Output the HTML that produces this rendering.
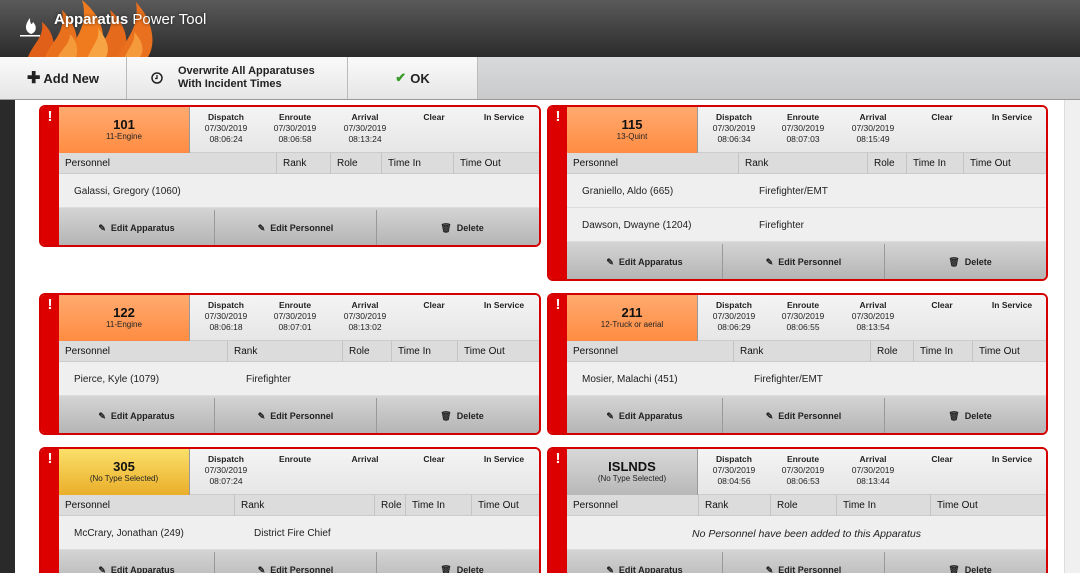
<!DOCTYPE html>
<html><head><meta charset="utf-8"><style>
*{box-sizing:border-box;margin:0;padding:0}
html,body{width:1080px;height:573px;overflow:hidden}
body{font-family:"Liberation Sans",sans-serif;background:#fff;position:relative}
#hdr{position:absolute;left:0;top:0;width:1080px;height:57px;background:linear-gradient(#5a5a5a,#2b2b2b);overflow:hidden}
#title{position:absolute;left:54px;top:11px;color:#fff;font-size:15px;text-shadow:0 0 3px rgba(0,0,0,.6)}
#title b{font-weight:bold}
#tb{position:absolute;left:0;top:57px;width:1080px;height:43px;background:linear-gradient(#d8dadc,#c8cacc);border-bottom:1px solid #999}
.tbb{position:absolute;top:0;height:42px;background:linear-gradient(#fafafa,#e6e6e6);border-right:1px solid #bbb;font-weight:bold;font-size:13px;color:#222;display:flex;align-items:center;justify-content:center}
#lstrip{position:absolute;left:0;top:100px;width:15px;height:473px;background:#2a2a2a}
#rstrip{position:absolute;left:1064px;top:100px;width:16px;height:473px;background:#f0f0f0;border-left:1px solid #ddd}
.card{position:absolute;border:2px solid #d40000;border-radius:6px;background:#f0f0f0;overflow:hidden}
.card .ex{position:absolute;left:0;top:0;bottom:0;width:18px;background:#dd0000;color:#fff;font-weight:bold;font-size:15px;text-align:center;padding-top:1px}
.top{position:absolute;left:18px;right:0;top:0;height:46px;background:linear-gradient(#f4f4f4,#e6e6e6);border-bottom:1px solid #ccc}
.app{position:absolute;left:0;top:0;width:131px;height:46px;text-align:center;border-right:1px solid #999}
.app .n{font-weight:bold;font-size:13px;color:#111;margin-top:11px;line-height:14px}
.app .t{font-size:8px;color:#222}
.tm{position:absolute;top:5px;width:70px;text-align:center;font-size:8.5px;line-height:11px;color:#222}
.cols{position:absolute;left:18px;right:0;top:46px;height:21px;background:#dcdcdc;border-bottom:1px solid #ccc}
.col{position:absolute;top:0;height:21px;border-left:1px solid #c4c4c4;font-size:10px;padding:5px 0 0 6px;color:#111}
.row{position:absolute;left:18px;right:0;height:34px;border-bottom:1px solid #ddd;background:#efefef;font-size:10px;color:#222}
.row span{position:absolute;top:12px}
.btns{position:absolute;left:18px;right:0;height:38px;background:linear-gradient(#d4d4d4,#b4b4b4)}
.btn{position:absolute;top:2px;height:36px;border-right:1px solid #999;font-weight:bold;font-size:9px;color:#222;display:flex;align-items:center;justify-content:center}
</style></head><body>
<div id="hdr">
<svg width="170" height="57" style="position:absolute;left:0;top:0">
<path d="M28 57 C34 42 44 38 42 22 C54 32 56 46 52 57Z" fill="#e0601a"/>
<path d="M45 57 C52 40 66 34 62 10 C78 26 80 44 74 57Z" fill="#e9701c"/>
<path d="M68 57 C72 40 90 28 82 0 C104 18 108 40 98 57Z" fill="#f07a1e"/>
<path d="M95 57 C100 42 116 32 110 10 C128 26 130 46 122 57Z" fill="#e56a1c"/>
<path d="M118 57 C124 40 140 30 136 2 C154 22 156 44 148 57Z" fill="#e8701e"/>
<path d="M58 57 C62 48 70 44 70 34 C78 42 78 52 76 57Z" fill="#f59a3a"/>
<path d="M88 57 C92 46 100 40 98 28 C108 40 110 50 106 57Z" fill="#f7a444"/>
<path d="M125 57 C128 48 136 42 134 32 C144 42 144 52 140 57Z" fill="#f59a3a"/>
<path d="M30 18 C25 24 24 31 31 34 C37 32 37 26 33 22 C32 25 30 25 30 18Z" fill="#fff"/>
<rect x="20" y="35" width="20" height="1.5" fill="#fff"/>
</svg>
<div id="title"><b>Apparatus</b> Power Tool</div>
</div>
<div id="tb">
<div class="tbb" style="left:0;width:127px"><span style="font-size:16px;margin-right:3px">✚</span>Add New</div>
<div class="tbb" style="left:127px;width:221px;justify-content:flex-start;padding-left:24px"><svg width="12" height="12" style="margin-right:15px"><circle cx="6" cy="6" r="5" fill="none" stroke="#222" stroke-width="1.5"/><path d="M6 3V6.5H4" fill="none" stroke="#222" stroke-width="1.3"/></svg><span style="font-size:11px;line-height:13px">Overwrite All Apparatuses<br>With Incident Times</span></div>
<div class="tbb" style="left:348px;width:130px"><span style="color:#3a9a2a;margin-right:4px">✔</span>OK</div>
</div>
<div id="lstrip"></div><div id="rstrip"></div>

<div class="card" style="left:39px;top:105px;width:502px;height:142px">
<div class="ex">!</div>
<div class="top"><div class="app" style="background:linear-gradient(#ffaa70,#ff8c42)"><div class="n">101</div><div class="t">11-Engine</div></div>
<div class="tm" style="left:132px"><b>Dispatch</b><br>07/30/2019<br>08:06:24</div>
<div class="tm" style="left:201px"><b>Enroute</b><br>07/30/2019<br>08:06:58</div>
<div class="tm" style="left:271px"><b>Arrival</b><br>07/30/2019<br>08:13:24</div>
<div class="tm" style="left:340px"><b>Clear</b></div>
<div class="tm" style="left:410px"><b>In Service</b></div></div>
<div class="cols"><div class="col" style="left:0;border:0">Personnel</div><div class="col" style="left:217px">Rank</div><div class="col" style="left:271px">Role</div><div class="col" style="left:322px">Time In</div><div class="col" style="left:394px">Time Out</div></div>
<div class="row" style="top:67px"><span style="left:15px">Galassi, Gregory (1060)</span></div>
<div class="btns" style="top:101px"><div class="btn" style="left:0;width:156px">✎&nbsp; Edit Apparatus</div><div class="btn" style="left:156px;width:162px">✎&nbsp; Edit Personnel</div><div class="btn" style="left:318px;width:170px;border:0">🗑&nbsp; Delete</div></div>
</div>

<div class="card" style="left:547px;top:105px;width:501px;height:176px">
<div class="ex">!</div>
<div class="top"><div class="app" style="background:linear-gradient(#ffaa70,#ff8c42)"><div class="n">115</div><div class="t">13-Quint</div></div>
<div class="tm" style="left:132px"><b>Dispatch</b><br>07/30/2019<br>08:06:34</div>
<div class="tm" style="left:201px"><b>Enroute</b><br>07/30/2019<br>08:07:03</div>
<div class="tm" style="left:271px"><b>Arrival</b><br>07/30/2019<br>08:15:49</div>
<div class="tm" style="left:340px"><b>Clear</b></div>
<div class="tm" style="left:410px"><b>In Service</b></div></div>
<div class="cols"><div class="col" style="left:0;border:0">Personnel</div><div class="col" style="left:171px">Rank</div><div class="col" style="left:300px">Role</div><div class="col" style="left:339px">Time In</div><div class="col" style="left:396px">Time Out</div></div>
<div class="row" style="top:67px"><span style="left:15px">Graniello, Aldo (665)</span><span style="left:192px">Firefighter/EMT</span></div>
<div class="row" style="top:101px"><span style="left:15px">Dawson, Dwayne (1204)</span><span style="left:192px">Firefighter</span></div>
<div class="btns" style="top:135px"><div class="btn" style="left:0;width:156px">✎&nbsp; Edit Apparatus</div><div class="btn" style="left:156px;width:162px">✎&nbsp; Edit Personnel</div><div class="btn" style="left:318px;width:170px;border:0">🗑&nbsp; Delete</div></div>
</div>

<div class="card" style="left:39px;top:293px;width:502px;height:142px">
<div class="ex">!</div>
<div class="top"><div class="app" style="background:linear-gradient(#ffaa70,#ff8c42)"><div class="n">122</div><div class="t">11-Engine</div></div>
<div class="tm" style="left:132px"><b>Dispatch</b><br>07/30/2019<br>08:06:18</div>
<div class="tm" style="left:201px"><b>Enroute</b><br>07/30/2019<br>08:07:01</div>
<div class="tm" style="left:271px"><b>Arrival</b><br>07/30/2019<br>08:13:02</div>
<div class="tm" style="left:340px"><b>Clear</b></div>
<div class="tm" style="left:410px"><b>In Service</b></div></div>
<div class="cols"><div class="col" style="left:0;border:0">Personnel</div><div class="col" style="left:168px">Rank</div><div class="col" style="left:283px">Role</div><div class="col" style="left:332px">Time In</div><div class="col" style="left:398px">Time Out</div></div>
<div class="row" style="top:67px"><span style="left:15px">Pierce, Kyle (1079)</span><span style="left:187px">Firefighter</span></div>
<div class="btns" style="top:101px"><div class="btn" style="left:0;width:156px">✎&nbsp; Edit Apparatus</div><div class="btn" style="left:156px;width:162px">✎&nbsp; Edit Personnel</div><div class="btn" style="left:318px;width:170px;border:0">🗑&nbsp; Delete</div></div>
</div>

<div class="card" style="left:547px;top:293px;width:501px;height:142px">
<div class="ex">!</div>
<div class="top"><div class="app" style="background:linear-gradient(#ffaa70,#ff8c42)"><div class="n">211</div><div class="t">12-Truck or aerial</div></div>
<div class="tm" style="left:132px"><b>Dispatch</b><br>07/30/2019<br>08:06:29</div>
<div class="tm" style="left:201px"><b>Enroute</b><br>07/30/2019<br>08:06:55</div>
<div class="tm" style="left:271px"><b>Arrival</b><br>07/30/2019<br>08:13:54</div>
<div class="tm" style="left:340px"><b>Clear</b></div>
<div class="tm" style="left:410px"><b>In Service</b></div></div>
<div class="cols"><div class="col" style="left:0;border:0">Personnel</div><div class="col" style="left:166px">Rank</div><div class="col" style="left:303px">Role</div><div class="col" style="left:346px">Time In</div><div class="col" style="left:405px">Time Out</div></div>
<div class="row" style="top:67px"><span style="left:15px">Mosier, Malachi (451)</span><span style="left:187px">Firefighter/EMT</span></div>
<div class="btns" style="top:101px"><div class="btn" style="left:0;width:156px">✎&nbsp; Edit Apparatus</div><div class="btn" style="left:156px;width:162px">✎&nbsp; Edit Personnel</div><div class="btn" style="left:318px;width:170px;border:0">🗑&nbsp; Delete</div></div>
</div>

<div class="card" style="left:39px;top:447px;width:502px;height:142px">
<div class="ex">!</div>
<div class="top"><div class="app" style="background:linear-gradient(#fbe06a,#eaae2a)"><div class="n">305</div><div class="t">(No Type Selected)</div></div>
<div class="tm" style="left:132px"><b>Dispatch</b><br>07/30/2019<br>08:07:24</div>
<div class="tm" style="left:201px"><b>Enroute</b></div>
<div class="tm" style="left:271px"><b>Arrival</b></div>
<div class="tm" style="left:340px"><b>Clear</b></div>
<div class="tm" style="left:410px"><b>In Service</b></div></div>
<div class="cols"><div class="col" style="left:0;border:0">Personnel</div><div class="col" style="left:175px">Rank</div><div class="col" style="left:315px">Role</div><div class="col" style="left:346px">Time In</div><div class="col" style="left:412px">Time Out</div></div>
<div class="row" style="top:67px"><span style="left:15px">McCrary, Jonathan (249)</span><span style="left:195px">District Fire Chief</span></div>
<div class="btns" style="top:101px"><div class="btn" style="left:0;width:156px">✎&nbsp; Edit Apparatus</div><div class="btn" style="left:156px;width:162px">✎&nbsp; Edit Personnel</div><div class="btn" style="left:318px;width:170px;border:0">🗑&nbsp; Delete</div></div>
</div>

<div class="card" style="left:547px;top:447px;width:501px;height:142px">
<div class="ex">!</div>
<div class="top"><div class="app" style="background:linear-gradient(#d8d8d8,#b8b8b8)"><div class="n">ISLNDS</div><div class="t">(No Type Selected)</div></div>
<div class="tm" style="left:132px"><b>Dispatch</b><br>07/30/2019<br>08:04:56</div>
<div class="tm" style="left:201px"><b>Enroute</b><br>07/30/2019<br>08:06:53</div>
<div class="tm" style="left:271px"><b>Arrival</b><br>07/30/2019<br>08:13:44</div>
<div class="tm" style="left:340px"><b>Clear</b></div>
<div class="tm" style="left:410px"><b>In Service</b></div></div>
<div class="cols"><div class="col" style="left:0;border:0">Personnel</div><div class="col" style="left:131px">Rank</div><div class="col" style="left:203px">Role</div><div class="col" style="left:269px">Time In</div><div class="col" style="left:363px">Time Out</div></div>
<div class="row" style="top:67px"><span style="left:0;right:0;text-align:center;font-style:italic;font-size:10.5px">No Personnel have been added to this Apparatus</span></div>
<div class="btns" style="top:101px"><div class="btn" style="left:0;width:156px">✎&nbsp; Edit Apparatus</div><div class="btn" style="left:156px;width:162px">✎&nbsp; Edit Personnel</div><div class="btn" style="left:318px;width:170px;border:0">🗑&nbsp; Delete</div></div>
</div>
</body></html>
